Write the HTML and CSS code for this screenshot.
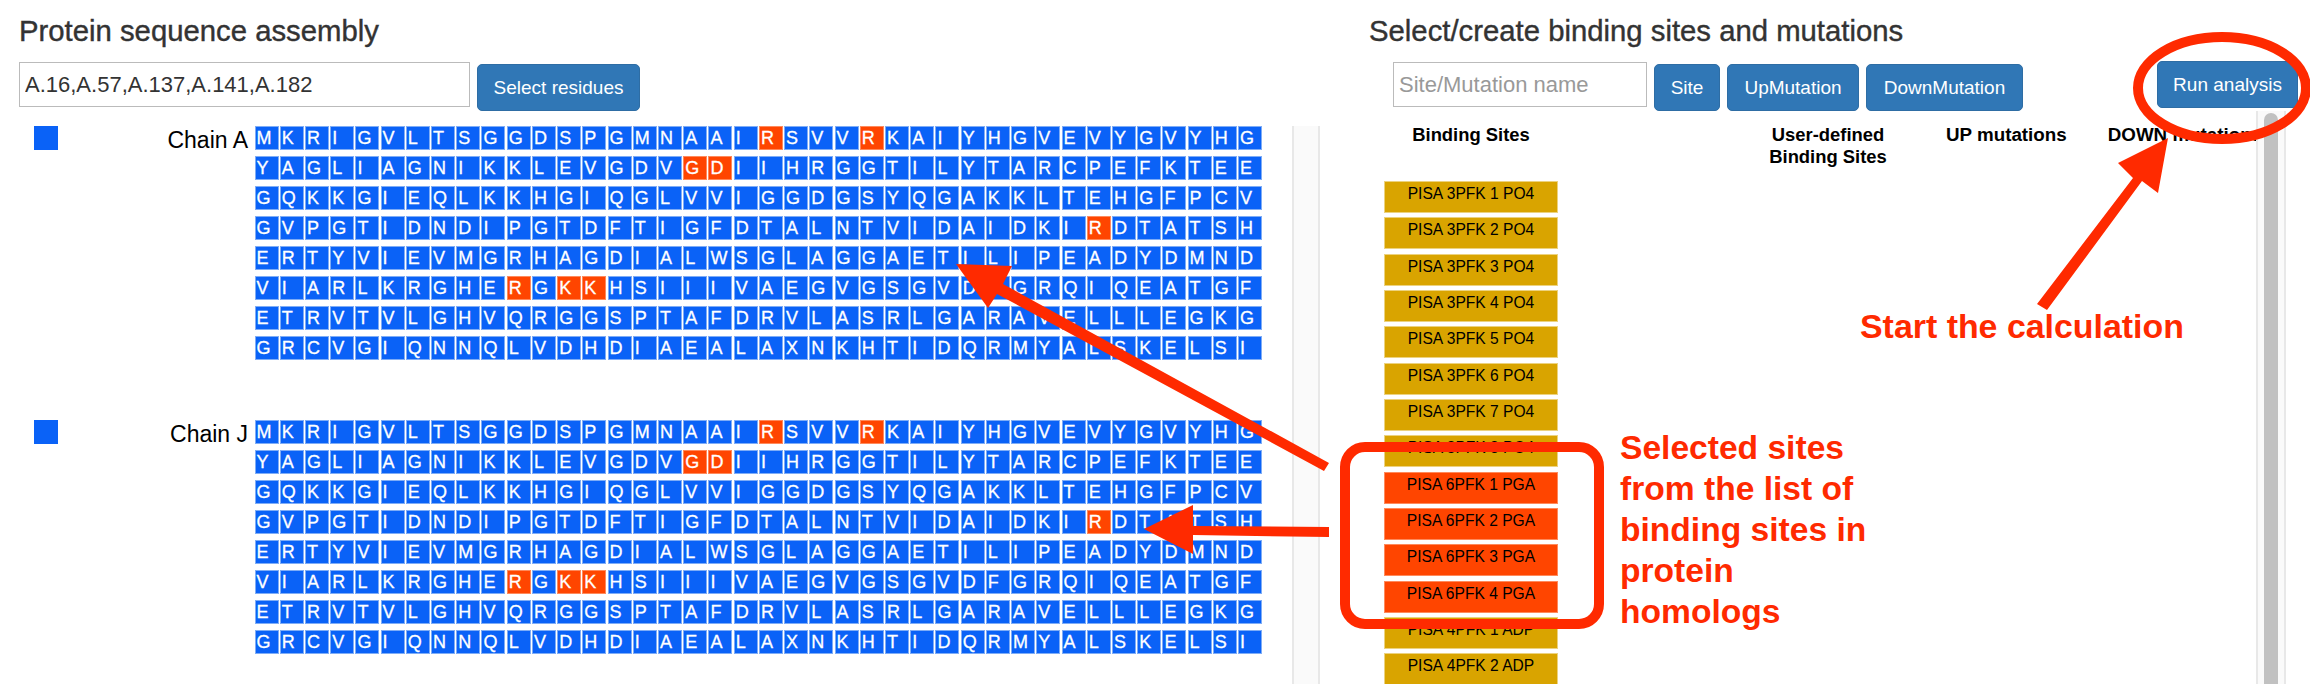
FILE: index.html
```html
<!DOCTYPE html>
<html>
<head>
  <title>Protein sequence assembly</title>
  <meta charset="UTF-8">
  <link rel="stylesheet" href="styles.css">
</head>
<body>
  <div class="page">
    <div class="left-panel">
      <h3 class="panel-title">Protein sequence assembly</h3>
      <div class="tools">
        <input type="text" class="text-input residues-input" value="A.16,A.57,A.137,A.141,A.182">
        <button class="action-button select-button">Select residues</button>
      </div>
      <div class="assembly">
        <div class="chains">
          <div class="chain">
            <span class="chain-color"></span>
            <span class="chain-name">Chain A</span>
            <div class="sequence">
<i>M</i><i>K</i><i>R</i><i>I</i><i>G</i><i>V</i><i>L</i><i>T</i><i>S</i><i>G</i><i>G</i><i>D</i><i>S</i><i>P</i><i>G</i><i>M</i><i>N</i><i>A</i><i>A</i><i>I</i><i class="hit">R</i><i>S</i><i>V</i><i>V</i><i class="hit">R</i><i>K</i><i>A</i><i>I</i><i>Y</i><i>H</i><i>G</i><i>V</i><i>E</i><i>V</i><i>Y</i><i>G</i><i>V</i><i>Y</i><i>H</i><i>G</i>
<i>Y</i><i>A</i><i>G</i><i>L</i><i>I</i><i>A</i><i>G</i><i>N</i><i>I</i><i>K</i><i>K</i><i>L</i><i>E</i><i>V</i><i>G</i><i>D</i><i>V</i><i class="hit">G</i><i class="hit">D</i><i>I</i><i>I</i><i>H</i><i>R</i><i>G</i><i>G</i><i>T</i><i>I</i><i>L</i><i>Y</i><i>T</i><i>A</i><i>R</i><i>C</i><i>P</i><i>E</i><i>F</i><i>K</i><i>T</i><i>E</i><i>E</i>
<i>G</i><i>Q</i><i>K</i><i>K</i><i>G</i><i>I</i><i>E</i><i>Q</i><i>L</i><i>K</i><i>K</i><i>H</i><i>G</i><i>I</i><i>Q</i><i>G</i><i>L</i><i>V</i><i>V</i><i>I</i><i>G</i><i>G</i><i>D</i><i>G</i><i>S</i><i>Y</i><i>Q</i><i>G</i><i>A</i><i>K</i><i>K</i><i>L</i><i>T</i><i>E</i><i>H</i><i>G</i><i>F</i><i>P</i><i>C</i><i>V</i>
<i>G</i><i>V</i><i>P</i><i>G</i><i>T</i><i>I</i><i>D</i><i>N</i><i>D</i><i>I</i><i>P</i><i>G</i><i>T</i><i>D</i><i>F</i><i>T</i><i>I</i><i>G</i><i>F</i><i>D</i><i>T</i><i>A</i><i>L</i><i>N</i><i>T</i><i>V</i><i>I</i><i>D</i><i>A</i><i>I</i><i>D</i><i>K</i><i>I</i><i class="hit">R</i><i>D</i><i>T</i><i>A</i><i>T</i><i>S</i><i>H</i>
<i>E</i><i>R</i><i>T</i><i>Y</i><i>V</i><i>I</i><i>E</i><i>V</i><i>M</i><i>G</i><i>R</i><i>H</i><i>A</i><i>G</i><i>D</i><i>I</i><i>A</i><i>L</i><i>W</i><i>S</i><i>G</i><i>L</i><i>A</i><i>G</i><i>G</i><i>A</i><i>E</i><i>T</i><i>I</i><i>L</i><i>I</i><i>P</i><i>E</i><i>A</i><i>D</i><i>Y</i><i>D</i><i>M</i><i>N</i><i>D</i>
<i>V</i><i>I</i><i>A</i><i>R</i><i>L</i><i>K</i><i>R</i><i>G</i><i>H</i><i>E</i><i class="hit">R</i><i>G</i><i class="hit">K</i><i class="hit">K</i><i>H</i><i>S</i><i>I</i><i>I</i><i>I</i><i>V</i><i>A</i><i>E</i><i>G</i><i>V</i><i>G</i><i>S</i><i>G</i><i>V</i><i>D</i><i>F</i><i>G</i><i>R</i><i>Q</i><i>I</i><i>Q</i><i>E</i><i>A</i><i>T</i><i>G</i><i>F</i>
<i>E</i><i>T</i><i>R</i><i>V</i><i>T</i><i>V</i><i>L</i><i>G</i><i>H</i><i>V</i><i>Q</i><i>R</i><i>G</i><i>G</i><i>S</i><i>P</i><i>T</i><i>A</i><i>F</i><i>D</i><i>R</i><i>V</i><i>L</i><i>A</i><i>S</i><i>R</i><i>L</i><i>G</i><i>A</i><i>R</i><i>A</i><i>V</i><i>E</i><i>L</i><i>L</i><i>L</i><i>E</i><i>G</i><i>K</i><i>G</i>
<i>G</i><i>R</i><i>C</i><i>V</i><i>G</i><i>I</i><i>Q</i><i>N</i><i>N</i><i>Q</i><i>L</i><i>V</i><i>D</i><i>H</i><i>D</i><i>I</i><i>A</i><i>E</i><i>A</i><i>L</i><i>A</i><i>X</i><i>N</i><i>K</i><i>H</i><i>T</i><i>I</i><i>D</i><i>Q</i><i>R</i><i>M</i><i>Y</i><i>A</i><i>L</i><i>S</i><i>K</i><i>E</i><i>L</i><i>S</i><i>I</i>
            </div>
          </div>
          <div class="chain">
            <span class="chain-color"></span>
            <span class="chain-name">Chain J</span>
            <div class="sequence">
<i>M</i><i>K</i><i>R</i><i>I</i><i>G</i><i>V</i><i>L</i><i>T</i><i>S</i><i>G</i><i>G</i><i>D</i><i>S</i><i>P</i><i>G</i><i>M</i><i>N</i><i>A</i><i>A</i><i>I</i><i class="hit">R</i><i>S</i><i>V</i><i>V</i><i class="hit">R</i><i>K</i><i>A</i><i>I</i><i>Y</i><i>H</i><i>G</i><i>V</i><i>E</i><i>V</i><i>Y</i><i>G</i><i>V</i><i>Y</i><i>H</i><i>G</i>
<i>Y</i><i>A</i><i>G</i><i>L</i><i>I</i><i>A</i><i>G</i><i>N</i><i>I</i><i>K</i><i>K</i><i>L</i><i>E</i><i>V</i><i>G</i><i>D</i><i>V</i><i class="hit">G</i><i class="hit">D</i><i>I</i><i>I</i><i>H</i><i>R</i><i>G</i><i>G</i><i>T</i><i>I</i><i>L</i><i>Y</i><i>T</i><i>A</i><i>R</i><i>C</i><i>P</i><i>E</i><i>F</i><i>K</i><i>T</i><i>E</i><i>E</i>
<i>G</i><i>Q</i><i>K</i><i>K</i><i>G</i><i>I</i><i>E</i><i>Q</i><i>L</i><i>K</i><i>K</i><i>H</i><i>G</i><i>I</i><i>Q</i><i>G</i><i>L</i><i>V</i><i>V</i><i>I</i><i>G</i><i>G</i><i>D</i><i>G</i><i>S</i><i>Y</i><i>Q</i><i>G</i><i>A</i><i>K</i><i>K</i><i>L</i><i>T</i><i>E</i><i>H</i><i>G</i><i>F</i><i>P</i><i>C</i><i>V</i>
<i>G</i><i>V</i><i>P</i><i>G</i><i>T</i><i>I</i><i>D</i><i>N</i><i>D</i><i>I</i><i>P</i><i>G</i><i>T</i><i>D</i><i>F</i><i>T</i><i>I</i><i>G</i><i>F</i><i>D</i><i>T</i><i>A</i><i>L</i><i>N</i><i>T</i><i>V</i><i>I</i><i>D</i><i>A</i><i>I</i><i>D</i><i>K</i><i>I</i><i class="hit">R</i><i>D</i><i>T</i><i>A</i><i>T</i><i>S</i><i>H</i>
<i>E</i><i>R</i><i>T</i><i>Y</i><i>V</i><i>I</i><i>E</i><i>V</i><i>M</i><i>G</i><i>R</i><i>H</i><i>A</i><i>G</i><i>D</i><i>I</i><i>A</i><i>L</i><i>W</i><i>S</i><i>G</i><i>L</i><i>A</i><i>G</i><i>G</i><i>A</i><i>E</i><i>T</i><i>I</i><i>L</i><i>I</i><i>P</i><i>E</i><i>A</i><i>D</i><i>Y</i><i>D</i><i>M</i><i>N</i><i>D</i>
<i>V</i><i>I</i><i>A</i><i>R</i><i>L</i><i>K</i><i>R</i><i>G</i><i>H</i><i>E</i><i class="hit">R</i><i>G</i><i class="hit">K</i><i class="hit">K</i><i>H</i><i>S</i><i>I</i><i>I</i><i>I</i><i>V</i><i>A</i><i>E</i><i>G</i><i>V</i><i>G</i><i>S</i><i>G</i><i>V</i><i>D</i><i>F</i><i>G</i><i>R</i><i>Q</i><i>I</i><i>Q</i><i>E</i><i>A</i><i>T</i><i>G</i><i>F</i>
<i>E</i><i>T</i><i>R</i><i>V</i><i>T</i><i>V</i><i>L</i><i>G</i><i>H</i><i>V</i><i>Q</i><i>R</i><i>G</i><i>G</i><i>S</i><i>P</i><i>T</i><i>A</i><i>F</i><i>D</i><i>R</i><i>V</i><i>L</i><i>A</i><i>S</i><i>R</i><i>L</i><i>G</i><i>A</i><i>R</i><i>A</i><i>V</i><i>E</i><i>L</i><i>L</i><i>L</i><i>E</i><i>G</i><i>K</i><i>G</i>
<i>G</i><i>R</i><i>C</i><i>V</i><i>G</i><i>I</i><i>Q</i><i>N</i><i>N</i><i>Q</i><i>L</i><i>V</i><i>D</i><i>H</i><i>D</i><i>I</i><i>A</i><i>E</i><i>A</i><i>L</i><i>A</i><i>X</i><i>N</i><i>K</i><i>H</i><i>T</i><i>I</i><i>D</i><i>Q</i><i>R</i><i>M</i><i>Y</i><i>A</i><i>L</i><i>S</i><i>K</i><i>E</i><i>L</i><i>S</i><i>I</i>
            </div>
          </div>
        </div>
        <div class="scroll-track"></div>
      </div>
    </div>

    <div class="right-panel">
      <h3 class="panel-title">Select/create binding sites and mutations</h3>
      <div class="tools site-tools">
        <input type="text" class="text-input name-input" placeholder="Site/Mutation name">
        <button class="action-button site-button">Site</button>
        <button class="action-button up-button">UpMutation</button>
        <button class="action-button down-button">DownMutation</button>
        <button class="action-button run-button">Run analysis</button>
      </div>
      <div class="site-area">
        <div class="site-columns">
          <div class="site-column binding-column">
            <div class="column-title">Binding Sites</div>
            <div class="site-list">
              <div class="site">PISA 3PFK 1 PO4</div>
              <div class="site">PISA 3PFK 2 PO4</div>
              <div class="site">PISA 3PFK 3 PO4</div>
              <div class="site">PISA 3PFK 4 PO4</div>
              <div class="site">PISA 3PFK 5 PO4</div>
              <div class="site">PISA 3PFK 6 PO4</div>
              <div class="site">PISA 3PFK 7 PO4</div>
              <div class="site">PISA 3PFK 8 PO4</div>
              <div class="site selected">PISA 6PFK 1 PGA</div>
              <div class="site selected">PISA 6PFK 2 PGA</div>
              <div class="site selected">PISA 6PFK 3 PGA</div>
              <div class="site selected">PISA 6PFK 4 PGA</div>
              <div class="site">PISA 4PFK 1 ADP</div>
              <div class="site">PISA 4PFK 2 ADP</div>
            </div>
          </div>
          <div class="column-title user-column">User-defined<br>Binding Sites</div>
          <div class="column-title up-column">UP mutations</div>
          <div class="column-title down-column">DOWN mutations</div>
        </div>
        <div class="scroll-track site-track"><div class="scroll-thumb"></div></div>
      </div>
    </div>

    <!-- hand-drawn markup on top of the screenshot -->
    <svg class="markup" width="2310" height="684" viewBox="0 0 2310 684">
      <ellipse cx="2222" cy="88" rx="84" ry="51" fill="none" stroke="#ff2a00" stroke-width="10"/>
      <polygon fill="#ff2a00" points="2037,304 2133,178 2118,163 2168,138 2158,193 2142,181 2047,310"/>
      <polygon fill="#ff2a00" points="1329,463 1003,284 1012,266 956,264 988,308 997,294 1324,471"/>
      <polygon fill="#ff2a00" points="1329,527 1193,526 1193,505 1144,529 1193,554 1193,535 1329,537"/>
      <rect x="1345" y="447" width="254" height="177" rx="20" fill="none" stroke="#ff2a00" stroke-width="10"/>
    </svg>
    <div class="note start-note">Start the calculation</div>
    <div class="note sites-note">Selected sites<br>from the list of<br>binding sites in<br>protein<br>homologs</div>
  </div>
</body>
</html>
```

FILE: styles.css
```css
body {
  margin: 0;
  background-color: #fff;
  font-family: "Liberation Sans", Arial, sans-serif;
}
.page {
  position: relative;
  display: flex;
  width: 2310px;
  height: 684px;
  overflow: hidden;
}
.left-panel {
  display: flex;
  flex-direction: column;
  width: 1320px;
}
.right-panel {
  display: flex;
  flex-direction: column;
  flex: 1;
  min-width: 0;
}
.panel-title {
  margin: 14px 0 0 0;
  height: 48px;
  font-size: 29.3px;
  font-weight: normal;
  line-height: 34px;
  color: #333;
  -webkit-text-stroke: 0.4px #333;
}
.left-panel .panel-title {
  padding-left: 19px;
}
.right-panel .panel-title {
  padding-left: 49px;
}
.tools {
  display: flex;
  align-items: flex-start;
  gap: 7px;
  height: 64px;
  box-sizing: border-box;
}
.left-panel .tools {
  padding-left: 19px;
}
.site-tools {
  height: 49px;
}
.text-input {
  box-sizing: border-box;
  height: 45px;
  padding: 0 5px;
  border: 1.5px solid #bbb;
  background-color: #fff;
  font-family: inherit;
  font-size: 22px;
  color: #333;
  outline: none;
}
.text-input::placeholder {
  color: #999;
}
.residues-input {
  width: 451px;
}
.name-input {
  width: 254px;
  margin-left: 73px;
}
.action-button {
  box-sizing: border-box;
  height: 47px;
  margin-top: 2px;
  padding: 0;
  border: 1px solid #2e6da4;
  border-radius: 5px;
  background-color: #3077b6;
  font-family: inherit;
  font-size: 19px;
  white-space: nowrap;
  color: #fff;
}
.select-button {
  width: 163px;
}
.site-button {
  width: 66px;
}
.up-button {
  width: 132px;
}
.down-button {
  width: 157px;
}
.run-button {
  width: 141px;
  margin-top: -1px;
  margin-left: 127px;
}
.assembly {
  display: flex;
  flex: 1;
  min-height: 0;
}
.chains {
  flex: 1;
}
.chain {
  display: flex;
  align-items: flex-start;
  margin-bottom: 60px;
}
.chain-color {
  width: 24px;
  height: 24px;
  margin-left: 33.5px;
  background-color: #0a62f7;
}
.chain-name {
  width: 197px;
  padding-right: 6.5px;
  box-sizing: border-box;
  font-size: 23px;
  line-height: 28px;
  text-align: right;
  color: #000;
}
.sequence {
  display: grid;
  grid-template-columns: repeat(40, 24px);
  grid-auto-rows: 24px;
  column-gap: 1.22px;
  row-gap: 6px;
}
.sequence i {
  box-sizing: border-box;
  padding-left: 1px;
  border: 1px solid #7fadf6;
  background-color: #0a62f7;
  font-size: 18px;
  font-style: normal;
  line-height: 22px;
  color: #fff;
  -webkit-text-stroke: 0.3px #fff;
}
.sequence i.hit {
  border-color: #ff8a5c;
  background-color: #ff4500;
}
.scroll-track {
  box-sizing: border-box;
  width: 28px;
  margin-left: 0;
  border-left: 2px solid #e8e8e8;
  border-right: 2px solid #e8e8e8;
  background-color: #fafafa;
}
.site-area {
  display: flex;
  flex: 1;
  min-height: 0;
}
.site-columns {
  display: flex;
  align-items: flex-start;
  width: 936px;
  padding: 13px 0 0 64px;
  box-sizing: border-box;
  overflow: hidden;
}
.site-column {
  width: 174px;
  flex-shrink: 0;
}
.column-title {
  flex-shrink: 0;
  font-size: 18.4px;
  font-weight: bold;
  line-height: 22px;
  text-align: center;
  white-space: nowrap;
  color: #000;
}
.site-list {
  display: flex;
  flex-direction: column;
  gap: 4.35px;
  margin-top: 35px;
}
.site {
  box-sizing: border-box;
  height: 32px;
  padding-top: 2px;
  border: 1px solid #ecd27f;
  background-color: #d9a400;
  font-size: 15.6px;
  line-height: 20px;
  text-align: center;
  color: #000;
}
.site.selected {
  border-color: #ff8a5c;
  background-color: #ff4500;
}
.user-column {
  width: 150px;
  margin-left: 195px;
}
.up-column {
  margin-left: 43px;
  font-size: 18.8px;
}
.down-column {
  margin-left: 41px;
  font-size: 18.8px;
}
.site-track {
  width: 30px;
  padding: 2px 6px 0 6px;
}
.scroll-thumb {
  height: 600px;
  border-radius: 8px;
  background-color: #c1c1c1;
}
.markup {
  position: absolute;
  left: 0;
  top: 0;
}
.note {
  position: absolute;
  font-size: 33.6px;
  font-weight: bold;
  line-height: 41px;
  color: #ff2a00;
}
.start-note {
  left: 1860px;
  top: 306px;
  font-size: 33.9px;
}
.sites-note {
  left: 1620px;
  top: 427px;
}
```
